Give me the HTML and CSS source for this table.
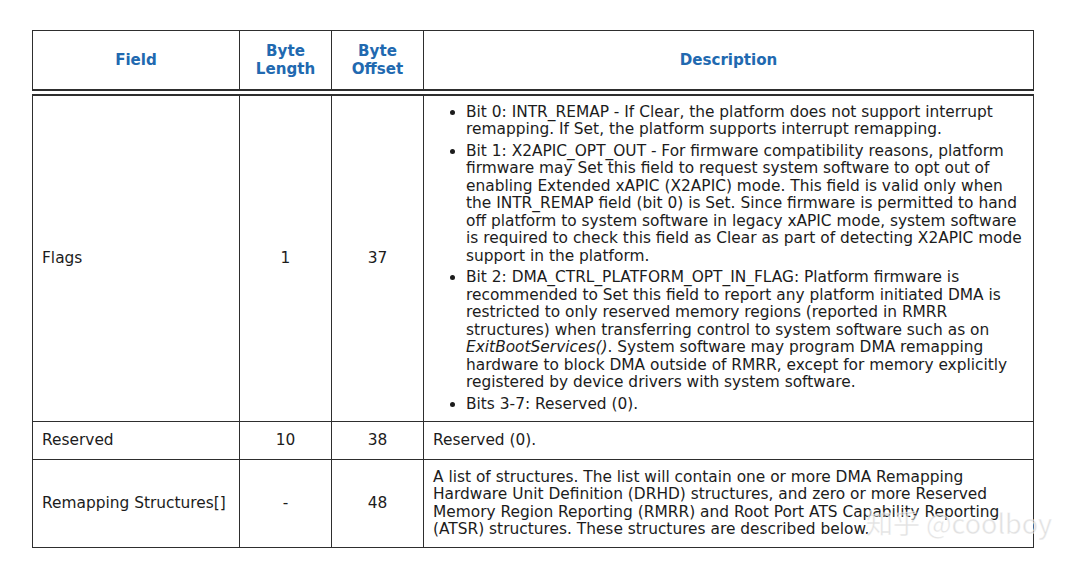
FILE: index.html
```html
<!DOCTYPE html>
<html>
<head>
<meta charset="utf-8">
<link rel="stylesheet" href="styles.css">
</head>
<body>
<div class="page">
  <table class="spec">
    <colgroup>
      <col class="c-field">
      <col class="c-len">
      <col class="c-off">
      <col class="c-desc">
    </colgroup>
    <thead>
      <tr>
        <th>Field</th>
        <th>Byte<br>Length</th>
        <th>Byte<br>Offset</th>
        <th>Description</th>
      </tr>
    </thead>
    <tbody>
      <tr class="r-flags">
        <td>Flags</td>
        <td class="num">1</td>
        <td class="num">37</td>
        <td class="desc">
          <ul>
            <li>Bit 0: INTR_REMAP - If Clear, the platform does not support interrupt remapping. If Set, the platform supports interrupt remapping.</li>
            <li>Bit 1: X2APIC_OPT_OUT - For firmware compatibility reasons, platform firmware may Set this field to request system software to opt out of enabling Extended xAPIC (X2APIC) mode. This field is valid only when the INTR_REMAP field (bit 0) is Set. Since firmware is permitted to hand off platform to system software in legacy xAPIC mode, system software is required to check this field as Clear as part of detecting X2APIC mode support in the platform.</li>
            <li>Bit 2: DMA_CTRL_PLATFORM_OPT_IN_FLAG: Platform firmware is recommended to Set this field to report any platform initiated DMA is restricted to only reserved memory regions (reported in RMRR structures) when transferring control to system software such as on <i>ExitBootServices()</i>. System software may program DMA remapping hardware to block DMA outside of RMRR, except for memory explicitly registered by device drivers with system software.</li>
            <li>Bits 3-7: Reserved (0).</li>
          </ul>
        </td>
      </tr>
      <tr class="r-res">
        <td>Reserved</td>
        <td class="num">10</td>
        <td class="num">38</td>
        <td class="desc">Reserved (0).</td>
      </tr>
      <tr class="r-remap">
        <td>Remapping Structures[]</td>
        <td class="num">-</td>
        <td class="num">48</td>
        <td class="desc">A list of structures. The list will contain one or more DMA Remapping Hardware Unit Definition (DRHD) structures, and zero or more Reserved Memory Region Reporting (RMRR) and Root Port ATS Capability Reporting (ATSR) structures. These structures are described below.</td>
      </tr>
    </tbody>
  </table>
  <div class="watermark">知乎 @coolboy</div>
</div>
</body>
</html>
```
FILE: styles.css
```css
html, body {
  margin: 0;
  padding: 0;
  background: #ffffff;
}
.page {
  position: relative;
  width: 1080px;
  height: 568px;
  padding: 30px 0 0 32px;
  box-sizing: border-box;
}
.spec {
  border-collapse: collapse;
  width: 1001px;
  table-layout: fixed;
  font-family: "DejaVu Sans", Verdana, sans-serif;
  font-size: 15.4px;
  line-height: 17.5px;
  color: #1c1c1c;
}
.c-field { width: 207px; }
.c-len { width: 92px; }
.c-off { width: 92px; }
.c-desc { width: 610px; }
.spec th, .spec td {
  border: 1.5px solid #2e2e2e;
  padding: 0 9px;
  vertical-align: middle;
}
.spec th {
  box-sizing: border-box;
  height: 62px;
  font-weight: bold;
  font-size: 15.1px;
  line-height: 18px;
  color: #2169b0;
  text-align: center;
  border-bottom: 7px double #2e2e2e;
}
.num { text-align: center; }
.r-flags td { height: 325px; }
.r-res td { height: 37px; }
.r-remap td { height: 87px; }
.desc ul {
  margin: 0;
  padding: 0 0 0 33px;
  list-style: disc;
}
.desc li {
  margin: 0 0 4px 0;
  padding-left: 0;
}
.desc li:last-child { margin-bottom: 0; }
.watermark {
  position: absolute;
  left: 866px;
  top: 503px;
  font-family: "Noto Sans CJK SC", "DejaVu Sans", sans-serif;
  font-size: 27px;
  color: rgba(195, 195, 195, 0.55);
  -webkit-text-stroke: 1px rgba(255, 255, 255, 0.6);
  white-space: nowrap;
}
```
